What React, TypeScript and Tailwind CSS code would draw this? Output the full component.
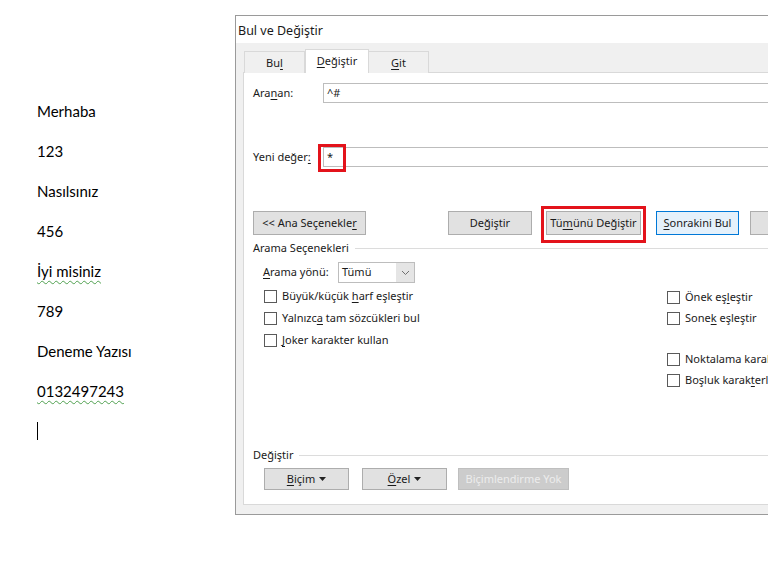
import React from "react";

const docLines: { text: string; squiggle?: boolean }[] = [
  { text: "Merhaba" },
  { text: "123" },
  { text: "Nasılsınız" },
  { text: "456" },
  { text: "İyi misiniz", squiggle: true },
  { text: "789" },
  { text: "Deneme Yazısı" },
  { text: "0132497243", squiggle: true },
];

function Key({ children }: { children: React.ReactNode }) {
  return <span className="underline underline-offset-2 decoration-1">{children}</span>;
}

function Btn({
  children,
  className = "",
  primary = false,
}: {
  children: React.ReactNode;
  className?: string;
  primary?: boolean;
}) {
  return (
    <div
      className={`flex h-[24px] items-center justify-center whitespace-nowrap border ${
        primary ? "border-[#0078d7] bg-[#e5f1fb]" : "border-[#adadad] bg-[#e1e1e1]"
      } ${className}`}
    >
      {children}
    </div>
  );
}

function Check({ children, className = "" }: { children: React.ReactNode; className?: string }) {
  return (
    <div className={`flex items-center gap-[5px] ${className}`}>
      <div className="h-[13px] w-[13px] shrink-0 border border-[#5a5a5a] bg-white" />
      <span className="whitespace-nowrap">{children}</span>
    </div>
  );
}

function GroupHeader({ title, className = "" }: { title: string; className?: string }) {
  return (
    <div className={`flex h-[14px] items-center ${className}`}>
      <span className="whitespace-nowrap">{title}</span>
      <div className="ml-[6px] h-px flex-1 bg-[#dcdcdc]" />
    </div>
  );
}

function Caret() {
  return (
    <svg width="7" height="4" viewBox="0 0 7 4" className="ml-[4px]">
      <path d="M0 0 L7 0 L3.5 4 Z" fill="#222" />
    </svg>
  );
}

export default function App() {
  return (
    <div className="flex h-[561px] w-[768px] overflow-hidden bg-white">
      {/* document */}
      <div className="w-[235px] shrink-0 pl-[37px] pt-[91px] font-['Lato',sans-serif] text-[15px] text-black">
        {docLines.map((l) => (
          <div key={l.text} className="flex h-[40px] items-center">
            <span
              className={
                l.squiggle
                  ? "underline decoration-wavy decoration-[#4fa04f] decoration-1 underline-offset-[3px]"
                  : ""
              }
            >
              {l.text}
            </span>
          </div>
        ))}
        <div className="flex h-[40px] items-center">
          <div className="h-[18px] w-px bg-black" />
        </div>
      </div>

      {/* dialog */}
      <div className="mt-[15px] flex h-[500px] w-[600px] shrink-0 flex-col border border-[#9a9a9a] bg-white font-['Noto_Sans',sans-serif] text-[11px] text-[#1a1a1a]">
        <div className="flex h-[27px] items-center pl-[2px] pt-[3px] text-[12.5px]">Bul ve Değiştir</div>

        <div className="flex flex-1 flex-col bg-[#f0f0f0] pb-[9px] pl-[7px]">
          {/* tabs */}
          <div className="relative z-10 -mb-px flex h-[30px] items-end pl-px">
            <div className="flex h-[22px] w-[61px] items-center justify-center border border-b-0 border-[#d9d9d9] bg-[#f0f0f0] pt-[2px]">
              <span>
                Bu<Key>l</Key>
              </span>
            </div>
            <div className="flex h-[24px] w-[64px] items-center justify-center border border-b-0 border-[#d9d9d9] bg-white">
              <span>
                <Key>D</Key>eğiştir
              </span>
            </div>
            <div className="flex h-[22px] w-[60px] items-center justify-center border border-b-0 border-l-0 border-[#d9d9d9] bg-[#f0f0f0] pt-[2px]">
              <span>
                <Key>G</Key>it
              </span>
            </div>
          </div>

          {/* panel */}
          <div className="flex flex-1 flex-col border border-[#d9d9d9] bg-white pb-[14px] pl-[9px]">
            <div className="mt-[10px] flex h-[20px] items-center">
              <span className="w-[70px] shrink-0">
                Ara<Key>n</Key>an:
              </span>
              <div className="flex h-[20px] flex-1 items-center border border-[#bdbdbd] pl-[3px]">^#</div>
            </div>

            <div className="mt-[44px] flex h-[20px] items-center">
              <span className="w-[70px] shrink-0">
                Yeni değer<Key>:</Key>
              </span>
              <div className="relative flex h-[20px] flex-1 items-center border border-[#bdbdbd] pl-[3px]">
                *
                <span className="absolute left-[-6px] top-[-4px] h-[28px] w-[28px] border-[3px] border-[#e3131b]" />
              </div>
            </div>

            <div className="mt-[44px] flex items-center">
              <Btn className="w-[117px]">
                <span>
                  &lt;&lt; Ana Seçenekle<Key>r</Key>
                </span>
              </Btn>
              <Btn className="ml-[82px] w-[87px]">Değiştir</Btn>
              <div className="relative ml-[14px]">
                <Btn className="w-[95px]">
                  <span>
                    Tü<Key>m</Key>ünü Değiştir
                  </span>
                </Btn>
                <span className="absolute left-[-5px] top-[-5px] h-[37px] w-[105px] border-[3px] border-[#e3131b]" />
              </div>
              <Btn primary className="ml-[15px] w-[86px]">
                <span>
                  <Key>S</Key>onrakini Bul
                </span>
              </Btn>
              <Btn className="ml-[11px] w-[86px]">{""}</Btn>
            </div>

            <GroupHeader title="Arama Seçenekleri" className="mt-[6px]" />

            <div className="mt-[7px] flex">
              <div className="w-[414px] shrink-0">
                <div className="flex h-[21px] items-center pl-[10px]">
                  <span className="w-[75px] shrink-0">
                    <Key>A</Key>rama yönü:
                  </span>
                  <div className="flex h-[21px] w-[77px] items-stretch border border-[#bdbdbd]">
                    <div className="flex flex-1 items-center pl-[3px]">Tümü</div>
                    <div className="flex w-[18px] items-center justify-center bg-[#e5e5e5]">
                      <svg width="9" height="6" viewBox="0 0 9 6">
                        <path d="M1 1 L4.5 4.5 L8 1" fill="none" stroke="#707070" strokeWidth="1" />
                      </svg>
                    </div>
                  </div>
                </div>
                <div className="mt-[2px] pl-[11px]">
                  <Check className="h-[22px]">
                    Büyük/küçük <Key>h</Key>arf eşleştir
                  </Check>
                  <Check className="h-[22px]">
                    Yalnızc<Key>a</Key> tam sözcükleri bul
                  </Check>
                  <Check className="h-[22px]">
                    <Key>J</Key>oker karakter kullan
                  </Check>
                </div>
              </div>
              <div className="pt-[24px]">
                <Check className="h-[22px]">
                  Önek eş<Key>l</Key>eştir
                </Check>
                <Check className="h-[21px]">
                  Sone<Key>k</Key> eşleştir
                </Check>
                <Check className="mt-[20px] h-[21px]">Noktalama karakterlerini yoksay</Check>
                <Check className="h-[20px]">
                  Boşluk karak<Key>t</Key>erlerini yoksay
                </Check>
              </div>
            </div>

            <GroupHeader title="Değiştir" className="mt-auto" />

            <div className="mt-[6px] flex items-center">
              <div className="ml-[11px] flex h-[22px] w-[85px] items-center justify-center border border-[#adadad] bg-[#e1e1e1]">
                <span>
                  <Key>B</Key>içim
                </span>
                <Caret />
              </div>
              <div className="ml-[13px] flex h-[22px] w-[85px] items-center justify-center border border-[#adadad] bg-[#e1e1e1]">
                <span>
                  <Key>Ö</Key>zel
                </span>
                <Caret />
              </div>
              <div className="ml-[11px] flex h-[22px] w-[111px] items-center justify-center whitespace-nowrap border border-[#bfbfbf] bg-[#cccccc] text-[#ececec]">
                Biçimlendirme Yok
              </div>
            </div>
          </div>
        </div>
      </div>
    </div>
  );
}
